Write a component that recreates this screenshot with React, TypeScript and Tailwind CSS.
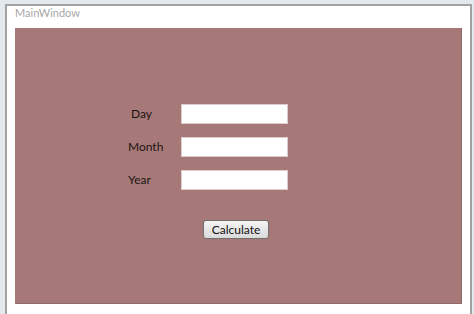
export default function App() {
  const rows = [
    { label: 'Day', pad: 'pl-[3px]' },
    { label: 'Month', pad: 'pl-0' },
    { label: 'Year', pad: 'pl-0' },
  ];

  return (
    <div className="w-[474px] h-[314px] bg-[#e4e9ee] pt-[4px] pl-[5px] pr-[2px] overflow-hidden font-['Lato',sans-serif]">
      <div className="h-[312px] bg-white border-l-2 border-t-2 border-r-2 border-[#a2a2a2]">
        <div className="h-[22px] pl-[8px] text-[11px] leading-[14px] text-[#a8a8a8]">MainWindow</div>
        <div className="ml-[8px] w-[447px] h-[276px] bg-[#a67978] border-b border-r border-[#8c6a6a] pt-[76px]">
          <div className="flex flex-col gap-[13px]">
            {rows.map((r) => (
              <div key={r.label} className="flex items-center h-[20px] pl-[113px]">
                <div className={`w-[53px] text-[12px] text-[#1c1414] ${r.pad}`}>{r.label}</div>
                <input className="w-[107px] h-[20px] bg-white border border-[#dccccc] outline-none" />
              </div>
            ))}
          </div>
          <div className="flex mt-[30px] pl-[188px]">
            <button className="w-[66px] h-[19px] text-[12px] leading-[15px] text-[#111] border border-[#707070] rounded-[3px] bg-gradient-to-b from-[#f4f4f4] to-[#dadada]">
              Calculate
            </button>
          </div>
        </div>
      </div>
    </div>
  );
}
